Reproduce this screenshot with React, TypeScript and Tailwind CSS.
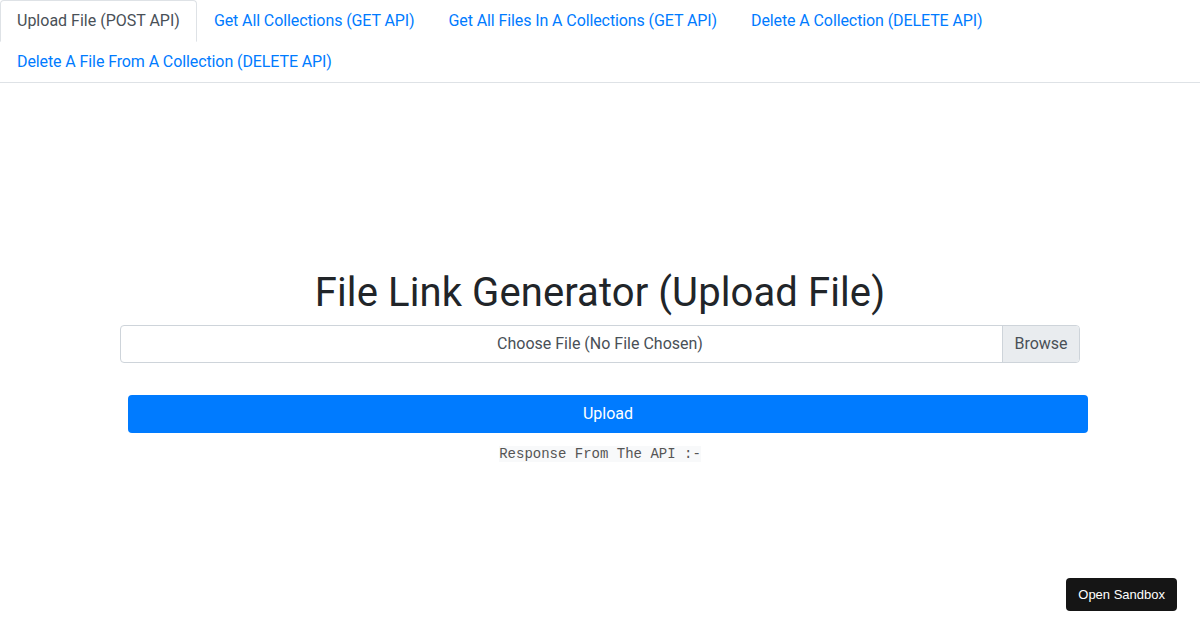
import React from 'react';

const tabs = [
  'Upload File (POST API)',
  'Get All Collections (GET API)',
  'Get All Files In A Collections (GET API)',
  'Delete A Collection (DELETE API)',
  'Delete A File From A Collection (DELETE API)',
];

export default function App() {
  return (
    <div className="relative h-[630px] w-[1200px] overflow-hidden bg-white font-['Roboto',sans-serif] text-[#212529]">
      {/* ── Tabs ─────────────────────────────────────── */}
      <ul className="flex flex-wrap border-b border-[#dee2e6]">
        {tabs.map((t, i) => (
          <li key={t} className="-mb-px">
            <a
              className={
                i === 0
                  ? 'block rounded-t-[4px] border border-[#dee2e6] border-b-white bg-white px-4 py-2 text-[16px] leading-6 text-[#495057]'
                  : 'block rounded-t-[4px] border border-transparent px-4 py-2 text-[16px] leading-6 tracking-[-0.1px] text-[#007bff]'
              }
            >
              {t}
            </a>
          </li>
        ))}
      </ul>

      {/* ── Upload form ──────────────────────────────── */}
      <div className="flex flex-col items-center pt-[186px]">
        <h1 className="mb-2 text-[40px] font-normal leading-[48px] tracking-[0.1px]">File Link Generator (Upload File)</h1>

        <div className="relative flex h-[38px] w-[960px] rounded-[4px] border border-[#ced4da] text-[16px] text-[#495057]">
          <div className="flex flex-1 items-center justify-center pl-[77px]">Choose File (No File Chosen)</div>
          <div className="flex w-[77px] items-center justify-center rounded-r-[3px] border-l border-[#ced4da] bg-[#e9ecef]">
            Browse
          </div>
        </div>

        <button className="ml-4 mt-8 h-[38px] w-[960px] rounded-[4px] bg-[#007bff] text-[16px] text-white">
          Upload
        </button>

        <pre className="mt-[13px] bg-[#f8f9fa] font-['Liberation_Mono',monospace] text-[14px] leading-[16px] text-[#555]">
          Response From The API :-
        </pre>
      </div>

      {/* ── Sandbox badge ────────────────────────────── */}
      <div className="absolute bottom-[19px] right-[23px] flex h-[33px] items-center rounded-[4px] bg-[#151515] px-[12px] font-['Liberation_Sans',sans-serif] text-[13px] text-white">
        Open Sandbox
      </div>
    </div>
  );
}
